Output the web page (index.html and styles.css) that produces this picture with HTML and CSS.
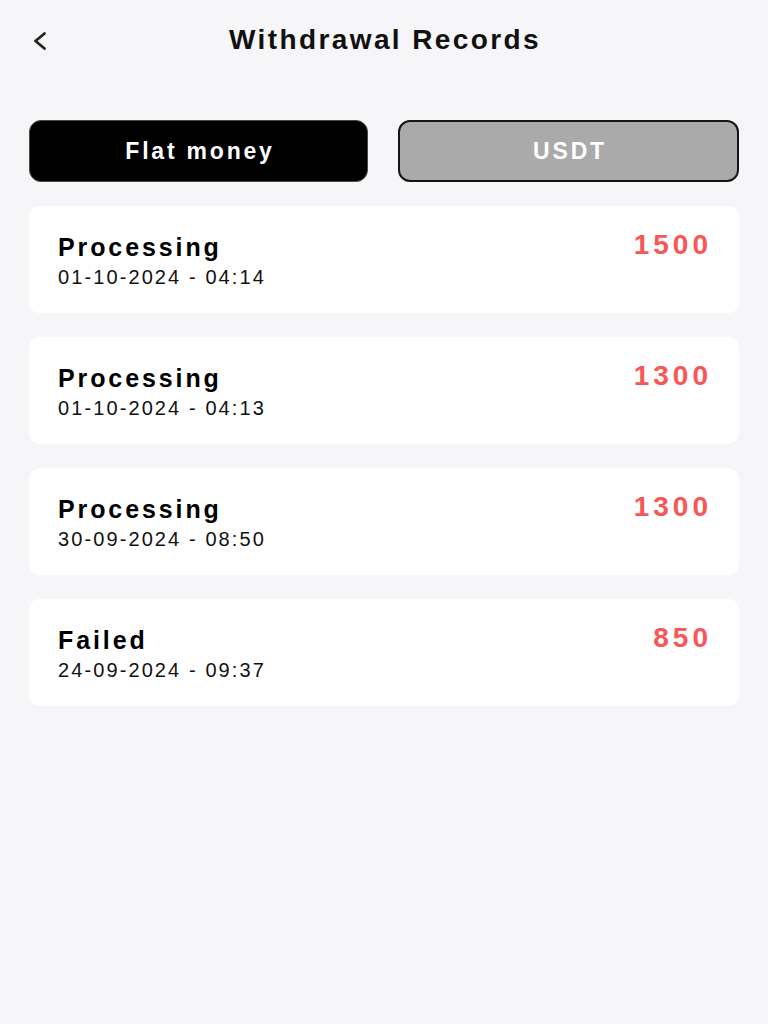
FILE: index.html
```html
<!DOCTYPE html>
<html lang="en">
<head>
    <meta charset="UTF-8">
    <meta name="viewport" content="width=device-width, initial-scale=1.0">
    <title>Withdrawal Records</title>
    <link rel="stylesheet" href="styles.css">
</head>
<body>
    <div class="page">
        <div class="header">
            <a class="back" href="#">
                <svg width="16" height="20" viewBox="0 0 16 20">
                    <polyline points="12.5,2.5 3.5,10 12.5,17.5" fill="none" stroke="#222" stroke-width="2.8" stroke-linecap="round" stroke-linejoin="round"/>
                </svg>
            </a>
            <h1>Withdrawal Records</h1>
            <span></span>
        </div>

        <div class="tabs">
            <button class="tab active">Flat money</button>
            <button class="tab">USDT</button>
        </div>

        <ul class="records">
            <li class="record">
                <div class="info">
                    <div class="status">Processing</div>
                    <div class="date">01-10-2024 - 04:14</div>
                </div>
                <div class="amount">1500</div>
            </li>
            <li class="record">
                <div class="info">
                    <div class="status">Processing</div>
                    <div class="date">01-10-2024 - 04:13</div>
                </div>
                <div class="amount">1300</div>
            </li>
            <li class="record">
                <div class="info">
                    <div class="status">Processing</div>
                    <div class="date">30-09-2024 - 08:50</div>
                </div>
                <div class="amount">1300</div>
            </li>
            <li class="record">
                <div class="info">
                    <div class="status">Failed</div>
                    <div class="date">24-09-2024 - 09:37</div>
                </div>
                <div class="amount">850</div>
            </li>
        </ul>
    </div>
</body>
</html>
```

FILE: styles.css
```css
body {
    font-family: "Liberation Sans", Arial, sans-serif;
    background-color: #f6f6f8;
    color: #000;
    margin: 0;
    padding: 0;
}

.page {
    padding: 0 29px;
}

/* Header */
.header {
    display: grid;
    grid-template-columns: 1fr auto 1fr;
    align-items: center;
    height: 80px;
}

.back {
    display: flex;
    align-items: center;
    padding-left: 3px;
    margin-top: 2px;
}

.header h1 {
    margin: 0;
    font-size: 28px;
    line-height: 80px;
    font-weight: bold;
    color: #111;
    letter-spacing: 2.4px;
    padding-left: 2px;
}

/* Tabs */
.tabs {
    display: flex;
    gap: 30px;
    margin-top: 40px;
}

.tab {
    flex: 1;
    height: 62px;
    border-radius: 12px;
    font-family: "Liberation Sans", Arial, sans-serif;
    font-size: 23px;
    font-weight: bold;
    letter-spacing: 2.8px;
    color: #fff;
    background-color: #aaaaaa;
    border: 2px solid #151515;
    cursor: pointer;
    padding: 0 0 0 3px;
}

.tab.active {
    background-color: #000;
    border: 1.5px solid #4a4a4a;
}

/* Records */
.records {
    list-style: none;
    margin: 24px 0 0;
    padding: 0;
    display: flex;
    flex-direction: column;
    gap: 24px;
}

.record {
    display: flex;
    justify-content: space-between;
    align-items: flex-start;
    box-sizing: border-box;
    height: 107px;
    padding: 24px 27px 0 29px;
    background-color: #fff;
    border-radius: 10px;
}

.status {
    margin-top: 3px;
    font-size: 25px;
    line-height: 28px;
    font-weight: bold;
    letter-spacing: 2.9px;
}

.date {
    margin-top: 5px;
    font-size: 20px;
    line-height: 22px;
    letter-spacing: 2.1px;
    color: #111;
}

.amount {
    font-size: 28px;
    line-height: 30px;
    font-weight: bold;
    letter-spacing: 4px;
    color: #f95656;
}
```
